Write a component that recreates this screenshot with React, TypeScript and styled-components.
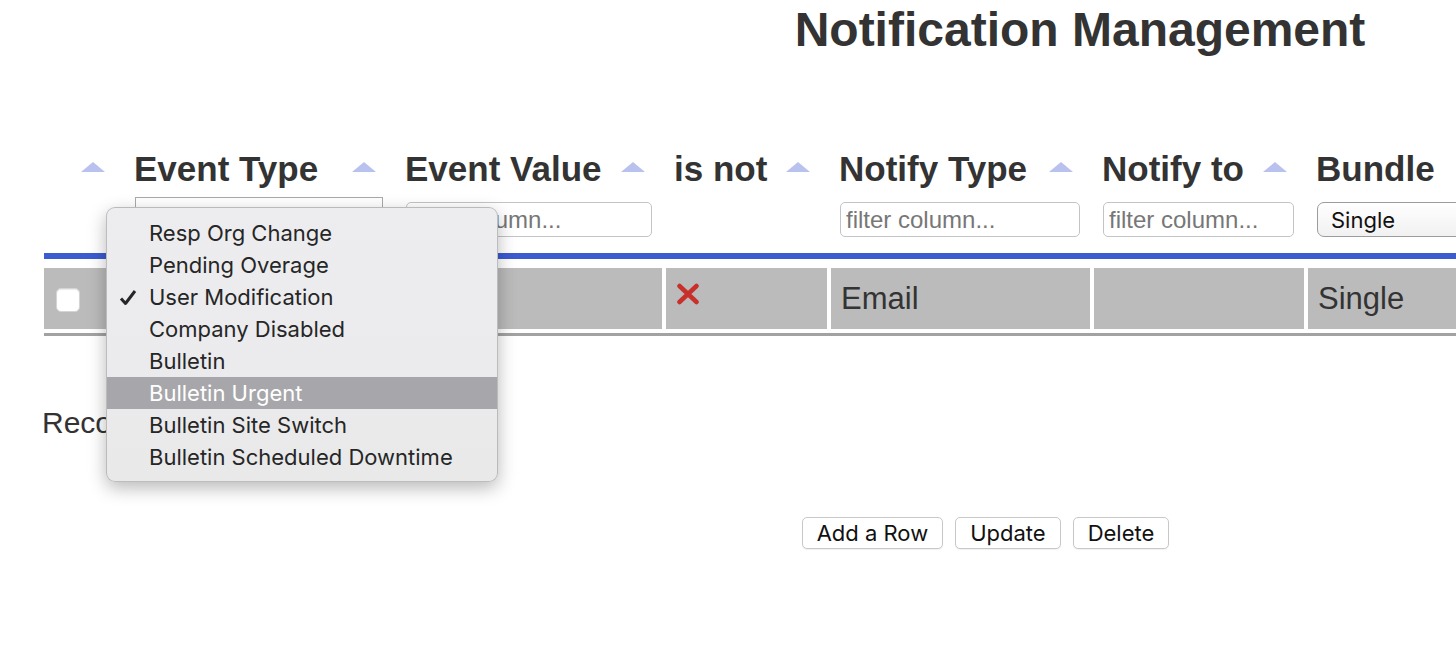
import React from 'react'
import styled, { createGlobalStyle } from 'styled-components'

const GlobalStyle = createGlobalStyle`
  html, body {
    margin: 0;
    padding: 0;
    background: #ffffff;
    overflow: hidden;
  }
  body {
    font-family: "Liberation Sans", Arial, Helvetica, sans-serif;
    color: #333333;
  }
`

const COLS = [78, 267, 265, 161, 259, 210, 400]

interface Column {
  label: string
  filter: 'none' | 'input' | 'open-select' | 'select'
  value?: string
}

const columns: Column[] = [
  { label: '', filter: 'none' },
  { label: 'Event Type', filter: 'open-select' },
  { label: 'Event Value', filter: 'input' },
  { label: 'is not', filter: 'none' },
  { label: 'Notify Type', filter: 'input' },
  { label: 'Notify to', filter: 'input' },
  { label: 'Bundle', filter: 'select', value: 'Single' },
]

const menuItems = [
  'Resp Org Change',
  'Pending Overage',
  'User Modification',
  'Company Disabled',
  'Bulletin',
  'Bulletin Urgent',
  'Bulletin Site Switch',
  'Bulletin Scheduled Downtime',
]

const Page = styled.div`
  position: relative;
  width: 2160px;
  height: 646px;
  padding-top: 6px;
  box-sizing: border-box;
`

const Title = styled.h1`
  margin: 0;
  font-family: "Liberation Sans", Arial, sans-serif;
  font-size: 48px;
  line-height: 48px;
  font-weight: 700;
  text-align: center;
  color: #333333;
`

const TableWrap = styled.div`
  margin-top: 100px;
  padding-left: 44px;
`

const Grid = styled.div`
  display: grid;
  grid-template-columns: ${COLS.map((c) => `${c}px`).join(' ')};
  column-gap: 4px;
`

const HeadCell = styled.div`
  display: flex;
  flex-direction: column;
  padding: 0 10px 0 9px;
`

const LabelLine = styled.div`
  display: flex;
  align-items: flex-start;
  justify-content: space-between;
  height: 34px;
`

const Label = styled.span`
  margin: -2px 0 0 -1px;
  font-size: 35px;
  line-height: 34px;
  font-weight: 700;
  color: #333333;
  white-space: nowrap;
`

const SortArrow = styled.span`
  width: 0;
  height: 0;
  margin-top: 8px;
  margin-right: 7px;
  border-left: 12px solid transparent;
  border-right: 12px solid transparent;
  border-bottom: 10px solid #b9c1ee;
`

const FilterSlot = styled.div`
  margin-top: 14px;
  height: 35px;
`

const FilterInput = styled.input`
  box-sizing: border-box;
  width: 100%;
  height: 35px;
  padding: 0 5px;
  border: 1px solid #c4c4c4;
  border-radius: 5px;
  font-family: "Liberation Sans", Arial, sans-serif;
  font-size: 24px;
  color: #333333;
  outline: none;
  &::placeholder {
    color: #777777;
  }
`

const OpenSelectBox = styled.div`
  box-sizing: border-box;
  width: 100%;
  height: 40px;
  margin-top: -5px;
  border: 1px solid #a9a9a9;
  background: #ffffff;
`

const SelectBox = styled.div`
  box-sizing: border-box;
  width: 100%;
  height: 35px;
  display: flex;
  align-items: center;
  padding-left: 13px;
  border: 1px solid #9c9c9c;
  border-radius: 7px;
  background: linear-gradient(#ffffff, #f1f1f1);
  font-family: "Inter", "Liberation Sans", sans-serif;
  font-size: 22px;
  color: #111111;
`

const BlueRule = styled.div`
  margin-top: 16px;
  height: 6px;
  background: #3b5bd0;
`

const BodyGrid = styled(Grid)`
  margin-top: 9px;
`

const BodyCell = styled.div`
  height: 61px;
  display: flex;
  align-items: center;
  padding-left: 10px;
  background: #bbbbbb;
  font-size: 31px;
  color: #333333;
  white-space: nowrap;
  overflow: hidden;
`

const Checkbox = styled.span`
  width: 24px;
  height: 24px;
  margin-left: 2px;
  margin-top: 2px;
  box-sizing: border-box;
  border-radius: 5px;
  background: #ffffff;
  border: 1px solid #d4d4d4;
  box-shadow: inset 0 1px 1px rgba(0, 0, 0, 0.08);
`

const CrossMark = styled.svg`
  margin-bottom: 9px;
`

const BodyBottom = styled.div`
  margin-top: 4px;
  height: 3px;
  background: #a2a2a2;
`

const Records = styled.div`
  margin: 72px 0 0 42px;
  font-size: 30px;
  line-height: 30px;
  color: #333333;
`

const ButtonBar = styled.div`
  width: 1971px;
  margin-top: 79px;
  display: flex;
  justify-content: center;
  gap: 12px;
`

const Button = styled.button`
  height: 32px;
  padding: 0 14px;
  background: #ffffff;
  border: 1px solid #c8c8c8;
  border-radius: 5px;
  box-shadow: 0 1px 1px rgba(0, 0, 0, 0.06);
  font-family: "Inter", "Liberation Sans", sans-serif;
  font-size: 22px;
  line-height: 30px;
  color: #111111;
`

const Menu = styled.ul`
  position: absolute;
  left: 106px;
  top: 207px;
  width: 392px;
  box-sizing: border-box;
  margin: 0;
  padding: 9px 0 8px;
  list-style: none;
  background: linear-gradient(#ededef, #ebebed 60%, #e9e9ea);
  border: 1px solid rgba(0, 0, 0, 0.2);
  border-radius: 9px;
  box-shadow: 0 6px 18px rgba(0, 0, 0, 0.28);
`

const MenuItem = styled.li<{ $active?: boolean }>`
  position: relative;
  height: 32px;
  display: flex;
  align-items: center;
  padding-left: 42px;
  font-family: "Inter", "Liberation Sans", sans-serif;
  font-size: 22px;
  color: ${({ $active }) => ($active ? '#ffffff' : '#262626')};
  background: ${({ $active }) => ($active ? '#a7a7ab' : 'transparent')};
`

const Check = styled.svg`
  position: absolute;
  left: 12px;
  top: 8px;
`

const renderFilter = (col: Column) => {
  switch (col.filter) {
    case 'input':
      return <FilterInput placeholder="filter column..." readOnly />
    case 'open-select':
      return <OpenSelectBox />
    case 'select':
      return <SelectBox>{col.value}</SelectBox>
    default:
      return null
  }
}

const App: React.FC = () => {
  return (
    <Page>
      <GlobalStyle />
      <Title>Notification Management</Title>
      <TableWrap>
        <Grid>
          {columns.map((col, i) => (
            <HeadCell key={i}>
              <LabelLine>
                <Label>{col.label}</Label>
                <SortArrow />
              </LabelLine>
              <FilterSlot>{renderFilter(col)}</FilterSlot>
            </HeadCell>
          ))}
        </Grid>
        <BlueRule />
        <BodyGrid>
          <BodyCell>
            <Checkbox />
          </BodyCell>
          <BodyCell>User Modification</BodyCell>
          <BodyCell />
          <BodyCell>
            <CrossMark width="24" height="22" viewBox="0 0 24 22">
              <path d="M3.5 3 L20.5 19 M20.5 3 L3.5 19" stroke="#c8302b" strokeWidth="4.5" strokeLinecap="round" />
            </CrossMark>
          </BodyCell>
          <BodyCell>Email</BodyCell>
          <BodyCell />
          <BodyCell>Single</BodyCell>
        </BodyGrid>
        <BodyBottom />
      </TableWrap>
      <Records>Records: 1</Records>
      <ButtonBar>
        <Button>Add a Row</Button>
        <Button>Update</Button>
        <Button>Delete</Button>
      </ButtonBar>
      <Menu>
        {menuItems.map((item) => (
          <MenuItem key={item} $active={item === 'Bulletin Urgent'}>
            {item === 'User Modification' && (
              <Check width="18" height="17" viewBox="0 0 18 17">
                <path d="M2 9.5 L6.5 14.5 L16 2" fill="none" stroke="#262626" strokeWidth="3" strokeLinejoin="round" />
              </Check>
            )}
            {item}
          </MenuItem>
        ))}
      </Menu>
    </Page>
  )
}

export default App
